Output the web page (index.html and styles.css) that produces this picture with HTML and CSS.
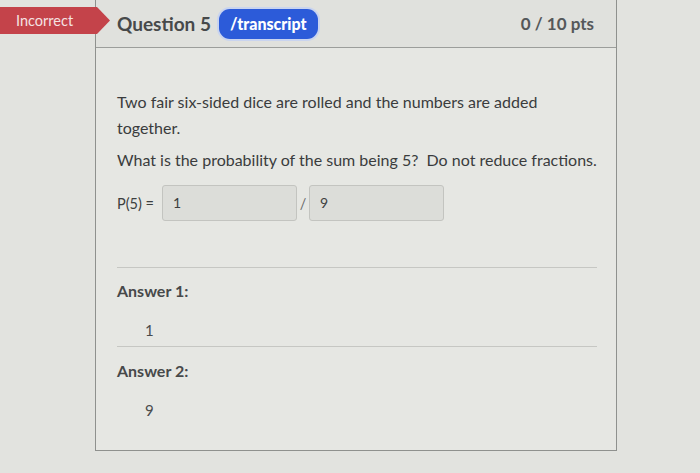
FILE: index.html
```html
<!DOCTYPE html>
<html lang="en">
<head>
  <meta charset="UTF-8" />
  <title>Question 5</title>
  <link rel="stylesheet" href="styles.css">
</head>
<body>

  <div class="page">
    <div class="flag">Incorrect</div>

    <div class="card">
      <div class="card-head">
        <div class="title">
          <span class="qname">Question 5</span>
          <span class="badge">/transcript</span>
        </div>
        <span class="pts">0 / 10 pts</span>
      </div>

      <div class="card-body">
        <p class="text">Two fair six-sided dice are rolled and the numbers are added together.</p>
        <p class="text ask">What is the probability of the sum being 5?&nbsp; Do not reduce fractions.</p>

        <div class="fraction">
          <span class="label">P(5) =</span>
          <span class="box">1</span>
          <span class="slash">/</span>
          <span class="box">9</span>
        </div>

        <div class="answer first">
          <div class="answer-name">Answer 1:</div>
          <div class="answer-value">1</div>
        </div>
        <div class="answer second">
          <div class="answer-name">Answer 2:</div>
          <div class="answer-value">9</div>
        </div>
      </div>
    </div>
  </div>

</body>
</html>
```

FILE: styles.css
```css
body {
  margin: 0;
  background-color: #e2e3df;
  font-family: Lato, 'Noto Sans', sans-serif;
  color: #3d3f40;
}
.page {
  position: relative;
  height: 473px;
}
.flag {
  position: absolute;
  left: 0;
  top: 7px;
  width: 110px;
  height: 27px;
  padding-left: 16px;
  box-sizing: border-box;
  background-color: #c4434a;
  color: #f4e2e2;
  font-size: 14.5px;
  line-height: 27px;
  clip-path: polygon(0 0, 97px 0, 110px 50%, 97px 100%, 0 100%);
}
.card {
  margin-left: 95px;
  width: 522px;
  height: 451px;
  box-sizing: border-box;
  border: 1px solid #8f918e;
  border-top: none;
  background-color: #e6e7e3;
}
.card-head {
  height: 48px;
  box-sizing: border-box;
  border-bottom: 1px solid #9c9e9b;
  background-color: #e0e1dd;
  display: flex;
  align-items: center;
  justify-content: space-between;
  padding: 0 22px 0 21px;
}
.title {
  display: flex;
  align-items: center;
  gap: 8px;
}
.qname {
  font-size: 19px;
  font-weight: bold;
  color: #47494a;
}
.badge {
  background-color: #2c5bd9;
  color: #fff;
  font-weight: 900;
  font-size: 16px;
  padding: 0 11px;
  height: 30px;
  line-height: 30px;
  border-radius: 11px;
  box-shadow: 0 0 0 2px #c9d4ef;
}
.pts {
  font-size: 17px;
  font-weight: bold;
  color: #55585a;
}
.card-body {
  padding: 41px 19px 0 21px;
}
.text {
  margin: 0;
  font-size: 16px;
  line-height: 26px;
  color: #3a3c3d;
}
.ask {
  margin-top: 6px;
}
.fraction {
  display: flex;
  align-items: center;
  margin-top: 12px;
  padding-bottom: 46px;
  border-bottom: 1px solid #c6c7c3;
  font-size: 14.5px;
}
.label {
  margin-right: 8px;
}
.box {
  width: 135px;
  height: 36px;
  box-sizing: border-box;
  border: 1px solid #c3c4c0;
  border-radius: 3px;
  background-color: #dcddd9;
  padding: 8px 0 0 10px;
  font-size: 14px;
}
.slash {
  width: 12px;
  text-align: center;
  color: #6b6d6e;
}
.answer {
  padding-top: 12px;
}
.answer.first {
  padding-bottom: 5px;
  border-bottom: 1px solid #c6c7c3;
}
.answer.second {
  padding-top: 13px;
}
.answer-name {
  font-size: 16px;
  font-weight: bold;
  line-height: 22px;
  color: #47494a;
}
.answer-value {
  margin-top: 17px;
  padding-left: 28px;
  font-size: 15px;
  line-height: 22px;
  color: #4a4c4d;
}
```
